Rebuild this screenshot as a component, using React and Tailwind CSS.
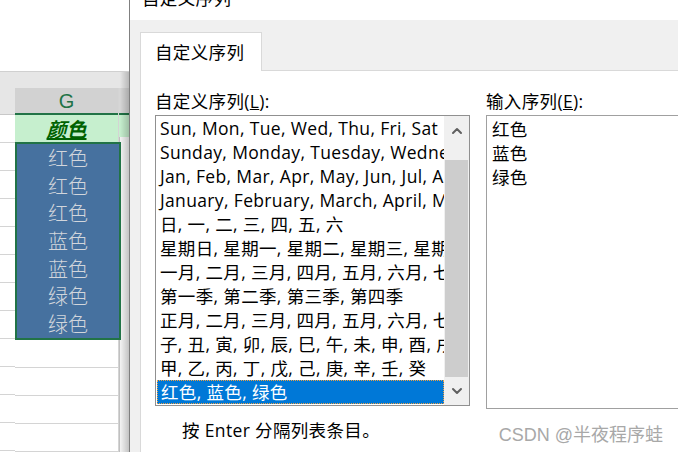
import { ChevronUp, ChevronDown } from "lucide-react";

const listItems = [
  "Sun, Mon, Tue, Wed, Thu, Fri, Sat",
  "Sunday, Monday, Tuesday, Wednesday, Thursday, Friday, Saturday",
  "Jan, Feb, Mar, Apr, May, Jun, Jul, Aug, Sep, Oct, Nov, Dec",
  "January, February, March, April, May, June, July",
  "日, 一, 二, 三, 四, 五, 六",
  "星期日, 星期一, 星期二, 星期三, 星期四, 星期五, 星期六",
  "一月, 二月, 三月, 四月, 五月, 六月, 七月, 八月",
  "第一季, 第二季, 第三季, 第四季",
  "正月, 二月, 三月, 四月, 五月, 六月, 七月, 八月",
  "子, 丑, 寅, 卯, 辰, 巳, 午, 未, 申, 酉, 戌, 亥",
  "甲, 乙, 丙, 丁, 戊, 己, 庚, 辛, 壬, 癸",
];

const cells = ["红色", "红色", "红色", "蓝色", "蓝色", "绿色", "绿色"];

const uiFont = { fontFamily: '"Open Sans", "Noto Sans CJK SC", sans-serif' };
const cjkFont = { fontFamily: '"Noto Sans CJK SC", sans-serif' };

const Sheet = () => (
  <div className="relative w-[129px] shrink-0 flex flex-col bg-white">
    <div className="h-[72px] shrink-0 bg-white border-b border-[#d0d0d0]" />
    <div className="h-[16px] shrink-0 bg-[#e6e6e6]" />
    <div className="flex flex-1">
      {/* column F */}
      <div className="w-[15px] shrink-0 flex flex-col">
        <div className="h-[27px] shrink-0 bg-[#e6e6e6] border-b border-[#c8c8c8]" />
        {Array.from({ length: 12 }).map((_, i) => (
          <div key={i} className="h-[28px] shrink-0 border-b border-[#d4d4d4]" />
        ))}
      </div>
      {/* column G */}
      <div className="w-[104px] shrink-0 flex flex-col border-r border-[#d4d4d4]">
        <div className="h-[27px] shrink-0 bg-[#d2d2d2] border-b-2 border-[#217346] flex items-center justify-center text-[20px] leading-none text-[#217346]" style={{ fontFamily: '"Liberation Sans", sans-serif' }}>
          G
        </div>
        <div className="h-[28px] shrink-0 bg-[#c6efce] flex items-center justify-center text-[20px] leading-none font-bold italic underline text-[#006100]" style={cjkFont}>
          颜色
        </div>
        <div className="relative z-10 w-[106px] h-[198px] shrink-0 -mt-[1px] border-2 border-[#217346] bg-[#46719f] flex flex-col overflow-hidden">
          {cells.map((c, i) => (
            <div key={i} className="flex-1 min-h-0 flex items-center justify-center text-[20px] leading-none font-light text-[#d2d6dc]" style={cjkFont}>
              {c}
            </div>
          ))}
        </div>
        {Array.from({ length: 4 }).map((_, i) => (
          <div key={i} className="h-[28px] shrink-0 border-b border-[#d4d4d4]" />
        ))}
      </div>
      {/* column H */}
      <div className="flex-1 flex flex-col">
        <div className="h-[27px] shrink-0 bg-[#d6d6d6] border-b-2 border-[#217346]" />
        <div className="h-[22px] shrink-0 bg-[#c6efce]" />
        <div className="flex-1 bg-[#f4f4f4] border-l border-[#c0c0c0]" />
      </div>
    </div>
    <div className="absolute right-0 top-[72px] bottom-0 w-[9px] bg-gradient-to-r from-transparent to-black/20" />
  </div>
);

const Dialog = () => (
  <div className="flex-1 flex flex-col border-l border-[#808080] bg-[#f0f0f0] tracking-[0.35px]" style={uiFont}>
    <div className="h-[20px] shrink-0 bg-white overflow-hidden pl-[12px]">
      <div className="-mt-[14px] text-[17.5px] leading-[24px] text-black">自定义序列</div>
    </div>
    <div className="pt-[12px] pl-[10px] flex">
      <div className="relative z-10 -mb-[1px] w-[122px] h-[39px] bg-white border border-b-0 border-[#d9d9d9] flex items-center pl-[14px] text-[17.5px] text-black">
        自定义序列
      </div>
    </div>
    <div className="relative flex-1 ml-[10px] bg-white border-t border-l border-[#d9d9d9] pl-[14px] pt-[18px] flex flex-col">
      <div className="flex gap-[16px]">
        <div className="w-[315px] shrink-0 flex flex-col">
          <div className="h-[24px] text-[17.5px] leading-[24px] text-black">
            自定义序列(<span className="underline">L</span>):
          </div>
          <div className="mt-[2px] h-[291px] border border-[#909090] flex">
            <div className="flex-1 min-w-0 flex flex-col pl-[1px]">
              {listItems.map((t, i) => (
                <div key={i} className="h-[24px] shrink-0 pl-[3px] text-[17.5px] leading-[24px] text-black whitespace-nowrap overflow-hidden">
                  {t}
                </div>
              ))}
              <div className="h-[24px] shrink-0 pl-[3px] text-[17.5px] leading-[22px] text-white whitespace-nowrap overflow-hidden bg-[#0078d7] border border-dotted border-[#f0a040]">
                红色, 蓝色, 绿色
              </div>
            </div>
            <div className="w-[25px] shrink-0 flex flex-col bg-[#f0f0f0]">
              <div className="h-[44px] shrink-0 flex justify-center pt-[7px]">
                <ChevronUp size={16} strokeWidth={3} color="#606060" />
              </div>
              <div className="flex-1 bg-[#cdcdcd] mx-[1px]" />
              <div className="h-[28px] shrink-0 flex items-center justify-center">
                <ChevronDown size={16} strokeWidth={3} color="#606060" />
              </div>
            </div>
          </div>
        </div>
        <div className="flex-1 flex flex-col">
          <div className="h-[24px] text-[17.5px] leading-[24px] text-black">
            输入序列(<span className="underline">E</span>):
          </div>
          <div className="mt-[2px] h-[294px] border border-r-0 border-[#a0a0a0] pl-[5px] pt-[1px] flex flex-col">
            {["红色", "蓝色", "绿色"].map((t) => (
              <div key={t} className="h-[24px] shrink-0 overflow-hidden text-[17.5px] leading-[24px] text-black">
                {t}
              </div>
            ))}
          </div>
        </div>
      </div>
      <div className="mt-[9px] pl-[27px] text-[17.5px] leading-[24px] text-black">
        按 Enter 分隔列表条目。
      </div>
    </div>
  </div>
);

export default function App() {
  return (
    <div className="relative w-[678px] h-[452px] overflow-hidden flex bg-white">
      <Sheet />
      <Dialog />
      <div className="absolute right-[15px] bottom-[6px] text-[18px] leading-[22px] text-[#a8a8a8]" style={{ fontFamily: '"Liberation Sans", "Noto Sans CJK SC", sans-serif' }}>
        CSDN @半夜程序蛙
      </div>
    </div>
  );
}
